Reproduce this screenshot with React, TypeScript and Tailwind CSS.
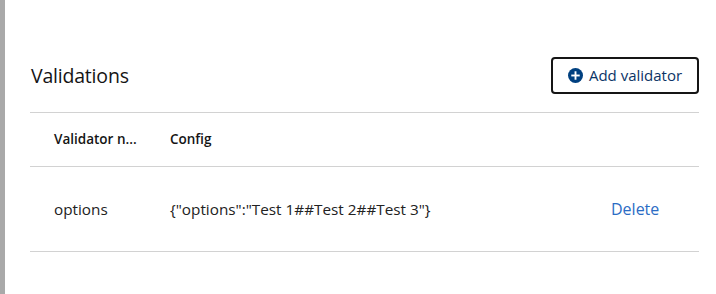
import React from "react";

export default function App() {
  return (
    <div
      className="flex h-[294px] w-[716px] bg-white text-[#151515]"
      style={{ fontFamily: '"Open Sans", "Liberation Sans", sans-serif' }}
    >
      <div className="w-[5px] shrink-0 bg-[#a9a9a9]" />
      <div className="flex flex-1 flex-col pl-[25px] pr-[17px] pt-[57px]">
        <div className="flex h-[37px] items-center justify-between">
          <h2 className="text-[19.5px] leading-none tracking-[-0.2px] pl-[1px]">Validations</h2>
          <button className="flex h-[37px] w-[148px] items-center justify-center gap-[6px] rounded-[4px] border-2 border-[#151515] text-[15px] text-[#0b3466]">
            <svg width="15" height="15" viewBox="0 0 16 16">
              <circle cx="8" cy="8" r="8" fill="#004080" />
              <rect x="7" y="3.5" width="2" height="9" fill="#fff" />
              <rect x="3.5" y="7" width="9" height="2" fill="#fff" />
            </svg>
            <span>Add validator</span>
          </button>
        </div>
        <div className="mt-[18px] border-t border-[#d2d2d2]">
          <div className="flex h-[54px] items-center border-b border-[#d2d2d2] text-[13.5px] font-semibold">
            <div className="w-[140px] pl-[24px]">Validator n...</div>
            <div>Config</div>
          </div>
          <div className="flex h-[85px] items-center border-b border-[#d2d2d2] text-[15.3px] text-[#222]">
            <div className="w-[140px] pl-[24px]">options</div>
            <div className="w-[441px]">{'{"options":"Test 1##Test 2##Test 3"}'}</div>
            <div className="text-[16px] text-[#2b6cc4]">Delete</div>
          </div>
        </div>
      </div>
    </div>
  );
}
